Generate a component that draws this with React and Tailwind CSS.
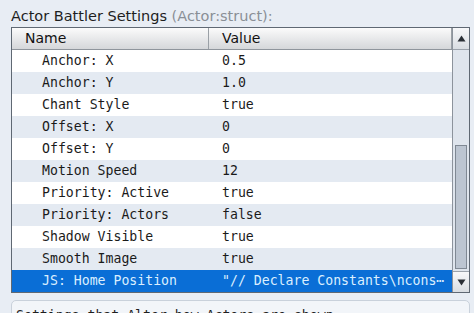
import React from 'react';

const rows = [
  ['Anchor: X', '0.5'],
  ['Anchor: Y', '1.0'],
  ['Chant Style', 'true'],
  ['Offset: X', '0'],
  ['Offset: Y', '0'],
  ['Motion Speed', '12'],
  ['Priority: Active', 'true'],
  ['Priority: Actors', 'false'],
  ['Shadow Visible', 'true'],
  ['Smooth Image', 'true'],
  ['JS: Home Position', '"// Declare Constants\\ncons\u22ef'],
];

const Arrow = ({ up }) => (
  <svg width="9" height="7" viewBox="0 0 9 7">
    {up ? <polygon points="4.5,0.5 8.5,6.5 0.5,6.5" fill="#2a2f36" /> : <polygon points="0.5,0.5 8.5,0.5 4.5,6.5" fill="#2a2f36" />}
  </svg>
);

const App = () => {
  return (
    <div className="w-[474px] h-[313px] overflow-hidden bg-[#e8edf4] pl-[11px] pr-[4px] pt-[7px] font-['DejaVu_Sans',sans-serif]">
      <div className="h-[20px] text-[14.5px] leading-[18px] text-[#1e1e1e] whitespace-nowrap">
        Actor Battler Settings <span className="text-[#8a8f96]">(Actor:struct):</span>
      </div>

      <div className="flex h-[266px] border border-[#5f6873] bg-white">
        <div className="flex-1 flex flex-col">
          <div className="flex h-[22px] border-b border-[#8f959c] bg-gradient-to-b from-[#fbfbfb] to-[#d5d7da] text-[14px] leading-[21px] text-[#111]">
            <div className="w-[197px] pl-[13px] border-r border-[#9aa0a6]">Name</div>
            <div className="flex-1 pl-[13px] border-r border-[#9aa0a6]">Value</div>
          </div>
          {rows.map(([name, value], i) => {
            const selected = i === rows.length - 1;
            const bg = selected ? 'bg-[#0a6ed6] text-[#dbeeff]' : i % 2 === 1 ? 'bg-[#e4eaf2] text-[#1a1a1a]' : 'bg-white text-[#1a1a1a]';
            return (
              <div key={name} className={`flex h-[22px] items-center font-['DejaVu_Sans_Mono',monospace] text-[13.2px] ${bg}`}>
                <div className="w-[197px] pl-[30px] whitespace-nowrap">{name}</div>
                <div className="flex-1 pl-[13px] whitespace-nowrap overflow-hidden">{value}</div>
              </div>
            );
          })}
        </div>

        <div className="w-[17px] flex flex-col border-l border-[#8c939c] bg-[#dfe5ed]">
          <div className="h-[22px] flex items-center justify-center border-b border-[#9ba2ab] bg-gradient-to-b from-[#f7f8fa] to-[#d9dde2]">
            <Arrow up />
          </div>
          <div className="h-[95px]" />
          <div className="h-[124px] mx-[2px] border border-[#7f8893] bg-[#bcc5d1]" />
          <div className="flex-1" />
          <div className="h-[21px] flex items-center justify-center border-t border-[#9ba2ab] bg-gradient-to-b from-[#f7f8fa] to-[#d9dde2]">
            <Arrow />
          </div>
        </div>
      </div>

      <div className="mt-[7px] h-[40px] rounded-[5px] border border-[#c9d1db] bg-[#f2f5f9] px-[4px] pt-[6px] font-['DejaVu_Sans_Mono',monospace] text-[13.2px] leading-[18px] text-[#1e1e1e] whitespace-nowrap">
        Settings that Alter how Actors are shown.
      </div>
    </div>
  );
};

export default App;
